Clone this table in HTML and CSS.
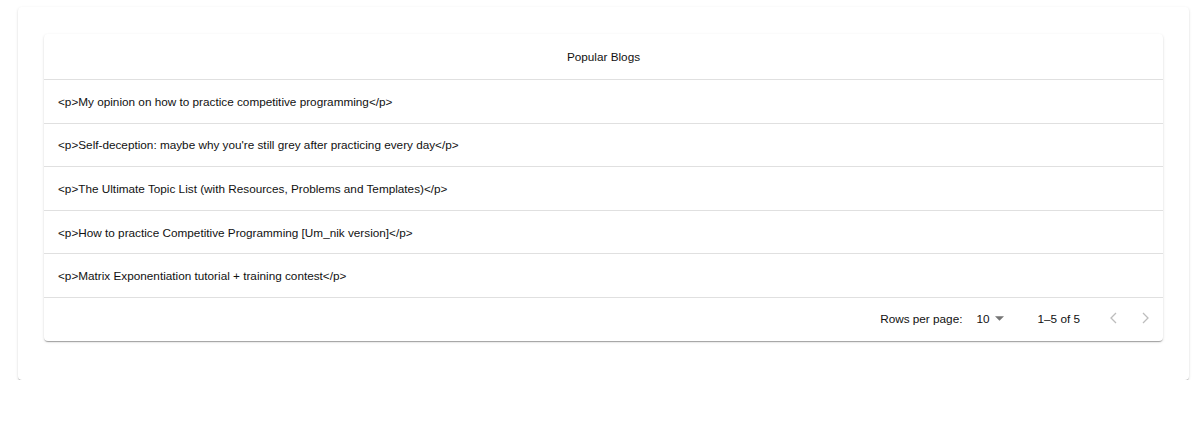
FILE: index.html
```html
<!DOCTYPE html>
<html lang="en">
<head>
<meta charset="UTF-8" />
<meta name="viewport" content="width=device-width, initial-scale=1" />
<title>Popular Blogs</title>
<link rel="stylesheet" href="styles.css">
</head>
<body>
  <div class="page">
    <div class="paper outer">
      <div class="paper table">
        <div class="head">Popular Blogs</div>
        <div class="row">&lt;p&gt;My opinion on how to practice competitive programming&lt;/p&gt;</div>
        <div class="row">&lt;p&gt;Self-deception: maybe why you're still grey after practicing every day&lt;/p&gt;</div>
        <div class="row">&lt;p&gt;The Ultimate Topic List (with Resources, Problems and Templates)&lt;/p&gt;</div>
        <div class="row">&lt;p&gt;How to practice Competitive Programming [Um_nik version]&lt;/p&gt;</div>
        <div class="row">&lt;p&gt;Matrix Exponentiation tutorial + training contest&lt;/p&gt;</div>
        <div class="pager">
          <span class="label">Rows per page:</span>
          <span class="select">10
            <svg class="caret" width="9" height="5" viewBox="0 0 10 5"><path d="M0 0 L5 5 L10 0 Z" fill="#757575"/></svg>
          </span>
          <span class="count">1–5 of 5</span>
          <svg class="nav prev" width="8" height="12" viewBox="0 0 8 12"><path d="M7 1 L2 6 L7 11" fill="none" stroke="#bdbdbd" stroke-width="1.3"/></svg>
          <svg class="nav" width="8" height="12" viewBox="0 0 8 12"><path d="M1 1 L6 6 L1 11" fill="none" stroke="#bdbdbd" stroke-width="1.3"/></svg>
        </div>
      </div>
    </div>
  </div>
</body>
</html>
```

FILE: styles.css
```css
* {
  box-sizing: border-box;
}
body {
  margin: 0;
  background: #fff;
  font-family: Arial, "Liberation Sans", sans-serif;
  font-size: 11.75px;
  color: #111;
}
.page {
  padding: 7px 11px 0 18px;
}
.paper {
  background: #fff;
  border-radius: 4px;
  box-shadow: 0 2px 1px -1px rgba(0, 0, 0, 0.2), 0 1px 1px 0 rgba(0, 0, 0, 0.14), 0 1px 3px 0 rgba(0, 0, 0, 0.12);
}
.outer {
  padding: 27px 26px 39px 26px;
}
.table {
  display: flex;
  flex-direction: column;
}
.head {
  height: 46px;
  display: flex;
  align-items: center;
  justify-content: center;
  border-bottom: 1px solid #e0e0e0;
}
.row {
  height: 43.6px;
  display: flex;
  align-items: center;
  padding-left: 14px;
  border-bottom: 1px solid #e0e0e0;
}
.pager {
  height: 43px;
  display: flex;
  align-items: center;
  justify-content: flex-end;
  padding-right: 13px;
  padding-bottom: 2px;
}
.label {
  margin-right: 14px;
}
.select {
  display: flex;
  align-items: center;
  gap: 5px;
  margin-right: 34px;
}
.caret {
  margin-top: 1px;
}
.count {
  margin-right: 29px;
}
.nav.prev {
  margin-right: 25px;
}
```
